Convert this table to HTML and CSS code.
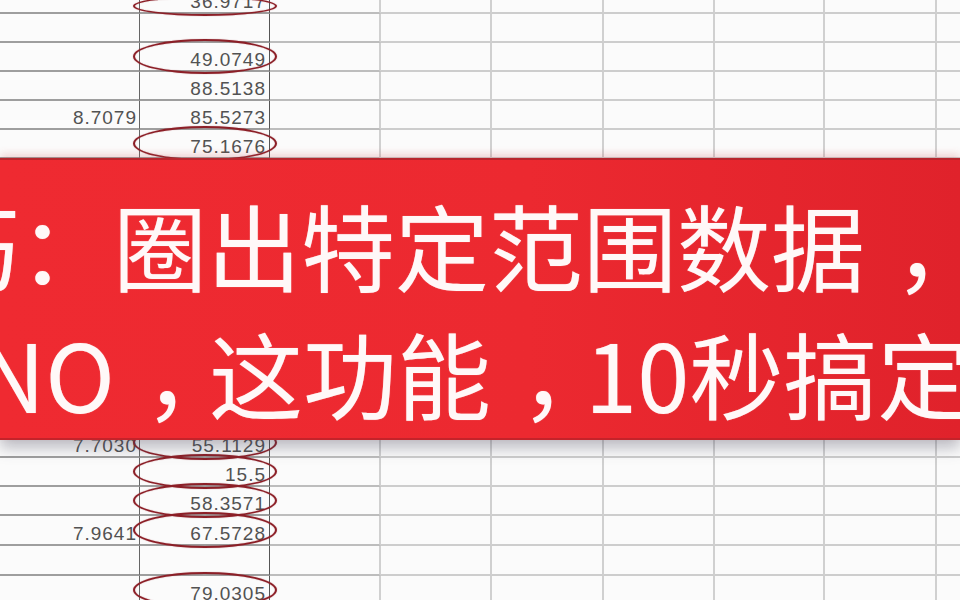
FILE: index.html
```html
<!DOCTYPE html>
<html lang="zh-CN">
<head>
<meta charset="utf-8">
<title>圈出特定范围数据</title>
<link rel="stylesheet" href="styles.css">
</head>
<body>
<div class="page">
  <div class="sheet">
    <div class="row h14">
      <div class="c a"></div><div class="c b"><span class="ring"></span>36.9717</div><div class="c c3"></div><div class="c"></div><div class="c"></div><div class="c"></div><div class="c"></div><div class="c"></div><div class="c last"></div>
    </div>
    <div class="row h29">
      <div class="c a"></div><div class="c b"></div><div class="c c3"></div><div class="c"></div><div class="c"></div><div class="c"></div><div class="c"></div><div class="c"></div><div class="c last"></div>
    </div>
    <div class="row h29">
      <div class="c a"></div><div class="c b"><span class="ring"></span>49.0749</div><div class="c c3"></div><div class="c"></div><div class="c"></div><div class="c"></div><div class="c"></div><div class="c"></div><div class="c last"></div>
    </div>
    <div class="row h29">
      <div class="c a"></div><div class="c b">88.5138</div><div class="c c3"></div><div class="c"></div><div class="c"></div><div class="c"></div><div class="c"></div><div class="c"></div><div class="c last"></div>
    </div>
    <div class="row h29">
      <div class="c a">8.7079</div><div class="c b">85.5273</div><div class="c c3"></div><div class="c"></div><div class="c"></div><div class="c"></div><div class="c"></div><div class="c"></div><div class="c last"></div>
    </div>
    <div class="row h29">
      <div class="c a"></div><div class="c b"><span class="ring"></span>75.1676</div><div class="c c3"></div><div class="c"></div><div class="c"></div><div class="c"></div><div class="c"></div><div class="c"></div><div class="c last"></div>
    </div>
    <div class="row gap">
      <div class="c a"></div><div class="c b"></div><div class="c c3"></div><div class="c"></div><div class="c"></div><div class="c"></div><div class="c"></div><div class="c"></div><div class="c last"></div>
    </div>
    <div class="row h29">
      <div class="c a">7.7030</div><div class="c b"><span class="ring"></span>55.1129</div><div class="c c3"></div><div class="c"></div><div class="c"></div><div class="c"></div><div class="c"></div><div class="c"></div><div class="c last"></div>
    </div>
    <div class="row h29">
      <div class="c a"></div><div class="c b"><span class="ring"></span>15.5</div><div class="c c3"></div><div class="c"></div><div class="c"></div><div class="c"></div><div class="c"></div><div class="c"></div><div class="c last"></div>
    </div>
    <div class="row h29">
      <div class="c a"></div><div class="c b"><span class="ring"></span>58.3571</div><div class="c c3"></div><div class="c"></div><div class="c"></div><div class="c"></div><div class="c"></div><div class="c"></div><div class="c last"></div>
    </div>
    <div class="row h30">
      <div class="c a">7.9641</div><div class="c b"><span class="ring"></span>67.5728</div><div class="c c3"></div><div class="c"></div><div class="c"></div><div class="c"></div><div class="c"></div><div class="c"></div><div class="c last"></div>
    </div>
    <div class="row h30">
      <div class="c a"></div><div class="c b"></div><div class="c c3"></div><div class="c"></div><div class="c"></div><div class="c"></div><div class="c"></div><div class="c"></div><div class="c last"></div>
    </div>
    <div class="row h30">
      <div class="c a"></div><div class="c b"><span class="ring"></span>79.0305</div><div class="c c3"></div><div class="c"></div><div class="c"></div><div class="c"></div><div class="c"></div><div class="c"></div><div class="c last"></div>
    </div>
  </div>

  <div class="banner">
    <div class="line"><span class="pre pre1">技巧</span><span class="rest"><span class="colon">：</span>圈出特定范围数据<span class="cm">，</span></span></div>
    <div class="line"><span class="pre pre2">NO</span><span class="rest"><span class="cm">，</span>这功能<span class="cm">，</span>10秒搞定</span></div>
  </div>
</div>
</body>
</html>
```

FILE: styles.css
```css
html, body {
  margin: 0;
  padding: 0;
  background: #fbfbfb;
}

.page {
  position: relative;
  width: 960px;
  height: 600px;
  overflow: hidden;
  background: #fbfbfb;
}

.sheet {
  display: flex;
  flex-direction: column;
}

.row {
  display: grid;
  grid-template-columns: 140px 130px 111px 111px 112px 111px 110px 112px 1fr;
  grid-template-rows: minmax(0, 1fr);
  flex: none;
}

.h14 { height: 14px; }
.h29 { height: 29px; }
.h30 { height: 30px; }
.gap { height: 270px; }

.c {
  box-sizing: border-box;
  min-height: 0;
  border-bottom: 2px solid #cdcdcd;
  border-right: 2px solid #d0d0d0;
  font-family: "Liberation Sans", Arial, sans-serif;
  font-size: 19px;
  line-height: 20px;
  letter-spacing: 1px;
  color: #525252;
  display: flex;
  justify-content: flex-end;
  align-items: flex-end;
  padding-right: 2px;
  white-space: nowrap;
}

.a {
  border-right: 1px solid #666666;
  border-bottom-color: #9e9e9e;
}

.b {
  position: relative;
  border-right: 1px solid #555555;
  border-bottom-color: #9e9e9e;
  padding-right: 3px;
}

.c3 {
  border-bottom-color: #bdbdbd;
}

.last {
  border-right: none;
}

.ring {
  position: absolute;
  top: -4px;
  bottom: -4px;
  left: -7px;
  right: -8px;
  border: 2px solid #8c1f27;
  border-radius: 50%;
  box-shadow: 0 0 1px rgba(140, 30, 40, 0.6), inset 0 0 1px rgba(140, 30, 40, 0.6);
}

.banner {
  position: absolute;
  left: 0;
  top: 158px;
  width: 960px;
  height: 282px;
  box-sizing: border-box;
  padding-top: 20px;
  display: flex;
  flex-direction: column;
  background: linear-gradient(90deg, #ef2a31 0%, #ec2930 55%, #e0222b 100%);
  border-top: 2px solid #b8262d;
  border-bottom: 2px solid #c4232a;
  box-shadow: 0 8px 14px rgba(70, 70, 90, 0.35), 0 -4px 8px rgba(230, 90, 90, 0.2);
  overflow: hidden;
  color: #fff8f8;
  font-family: "Noto Sans CJK SC", "Noto Sans", sans-serif;
  font-size: 94px;
  line-height: 128px;
  font-weight: 400;
  text-shadow: 0 0 1px rgba(255, 210, 210, 0.7);
}

.line {
  display: flex;
  white-space: nowrap;
  flex: none;
}

.pre {
  display: flex;
  justify-content: flex-end;
  flex: none;
}

.pre1 { width: 19px; }
.pre2 { width: 115px; }

.rest {
  flex: none;
}

.colon {
  font-family: "Noto Sans CJK TC", "Noto Sans CJK SC", sans-serif;
}

.cm {
  font-family: "Noto Sans CJK SC", sans-serif;
  padding-left: 0.31em;
  margin-right: -0.31em;
}
```
